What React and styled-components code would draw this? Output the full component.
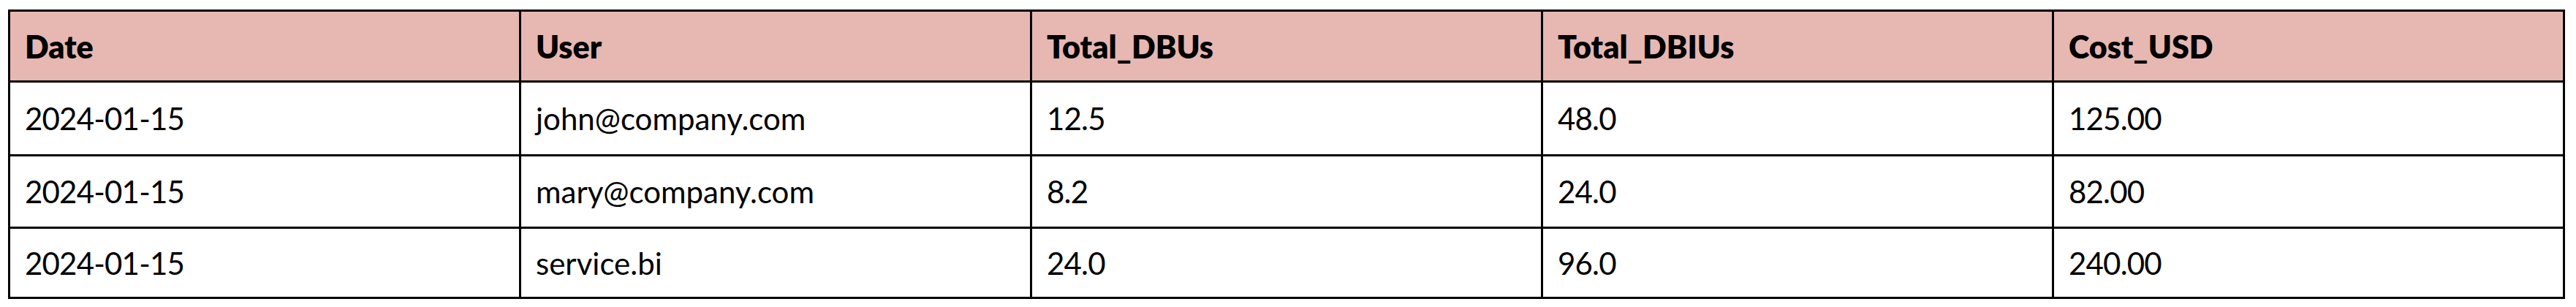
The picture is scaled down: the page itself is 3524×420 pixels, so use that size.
import React from 'react';
import styled, { createGlobalStyle } from 'styled-components';

const GlobalStyle = createGlobalStyle`
  html, body {
    margin: 0;
    padding: 0;
    background: #ffffff;
  }
  body {
    font-family: Lato, "Liberation Sans", sans-serif;
    color: #000;
  }
`;

const Page = styled.div`
  padding: 13px 15px 0 11px;
`;

const Table = styled.table`
  width: 3498px;
  border-collapse: collapse;
  table-layout: fixed;
  border: 3px solid #000;
`;

const HeadCell = styled.th`
  height: 94px;
  padding: 0 20px;
  box-sizing: content-box;
  border: 3px solid #000;
  background: #e6b8b1;
  text-align: left;
  vertical-align: middle;
  font-size: 43px;
  font-weight: 800;
  letter-spacing: 0;
`;

const Cell = styled.td`
  height: ${(p) => p.$h}px;
  padding: 0 20px;
  box-sizing: content-box;
  border: 3px solid #000;
  vertical-align: middle;
  font-size: 42px;
  font-weight: 400;
  letter-spacing: ${(p) => (p.$num ? '-0.8px' : '0px')};
`;

const columns = ['Date', 'User', 'Total_DBUs', 'Total_DBIUs', 'Cost_USD'];

const rows = [
  { h: 98, cells: ['2024-01-15', 'john@company.com', '12.5', '48.0', '125.00'] },
  { h: 96, cells: ['2024-01-15', 'mary@company.com', '8.2', '24.0', '82.00'] },
  { h: 93, cells: ['2024-01-15', 'service.bi', '24.0', '96.0', '240.00'] },
];

const App = () => {
  return (
    <Page>
      <GlobalStyle />
      <Table>
        <thead>
          <tr>
            {columns.map((c) => (
              <HeadCell key={c}>{c}</HeadCell>
            ))}
          </tr>
        </thead>
        <tbody>
          {rows.map((r, i) => (
            <tr key={i}>
              {r.cells.map((c, j) => (
                <Cell key={j} $h={r.h} $num={j !== 1}>
                  {c}
                </Cell>
              ))}
            </tr>
          ))}
        </tbody>
      </Table>
    </Page>
  );
};

export default App;
